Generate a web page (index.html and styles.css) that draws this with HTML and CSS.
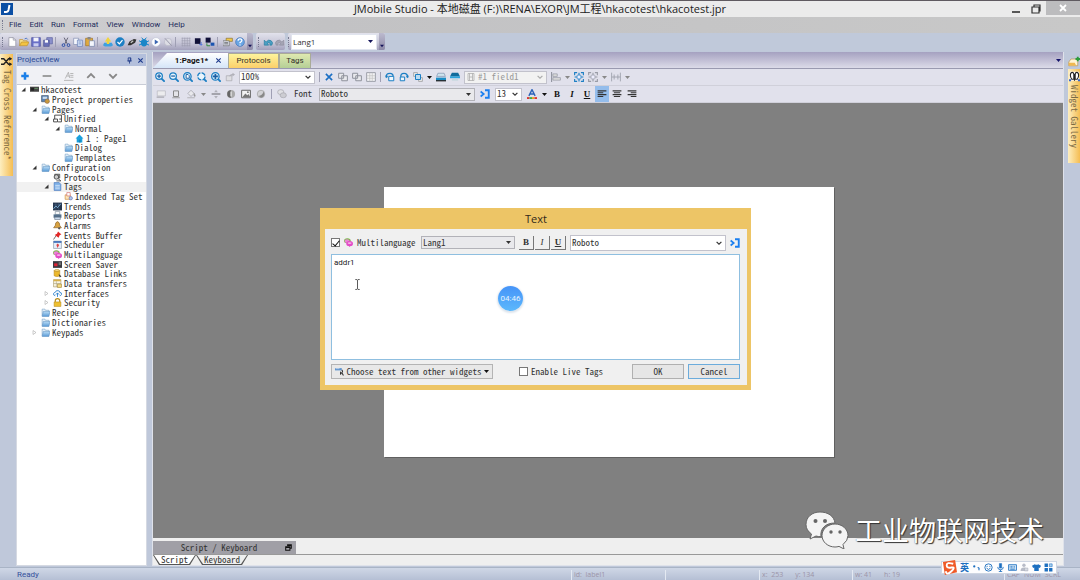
FILE: index.html
```html
<!DOCTYPE html>
<html lang="en">
<head>
<meta charset="utf-8">
<title>JMobile Studio</title>
<link rel="stylesheet" href="styles.css">
</head>
<body>
<svg class="defs" aria-hidden="true">
  <defs>
    <linearGradient id="gFold" x1="0" y1="0" x2="0" y2="1"><stop offset="0" stop-color="#b9dcf6"/><stop offset="1" stop-color="#5a9bd6"/></linearGradient>
  </defs>
  <symbol id="down" viewBox="0 0 10 10"><path d="M0 2h10L5 8z" fill="currentColor"/></symbol>
  <symbol id="chev" viewBox="0 0 10 10"><path d="M1 3l4 4 4-4" fill="none" stroke="currentColor" stroke-width="2"/></symbol>
  <symbol id="open" viewBox="0 0 10 10"><path d="M9 1v8H1z" fill="#333"/></symbol>
  <symbol id="shut" viewBox="0 0 10 10"><path d="M2 1l6 4-6 4z" fill="#fff" stroke="#999"/></symbol>
  <symbol id="folder" viewBox="0 0 16 16"><path d="M2 14V2h5l1 2h6v3" fill="#e8f1f8" stroke="#6c9cc4"/><path d="M4 6h12l-2 9H2z" fill="url(#gFold)" stroke="#5b8fc0"/></symbol>
  <symbol id="newdoc" viewBox="0 0 16 16"><path d="M3 1h7l4 4v10H3z" fill="#fff" stroke="#889"/><path d="M10 1v4h4" fill="none" stroke="#889"/></symbol>
  <symbol id="opendoc" viewBox="0 0 16 16"><path d="M1 14V4h5l1 2h6v2" fill="#f6df8a" stroke="#b98a2a"/><path d="M4 8h12l-3 6H1z" fill="#f3c341" stroke="#b98a2a"/><path d="M9 3q3-3 5 1" fill="none" stroke="#4a76c8" stroke-width="1.5"/></symbol>
  <symbol id="save" viewBox="0 0 16 16"><path d="M1 1h14v14H1z" fill="#6a70c8" stroke="#4a4f9c"/><path d="M4 1h8v6H4z" fill="#f2f2fa"/><path d="M4 10h8v5H4z" fill="#c9cdf0"/></symbol>
  <symbol id="saveall" viewBox="0 0 16 16"><path d="M6 1h9v10H6z" fill="#8b90cc" stroke="#555a9c"/><path d="M1 5h9v10H1z" fill="#6a70b8" stroke="#4a4f8c"/><path d="M3 5h5v4H3z" fill="#fff"/></symbol>
  <symbol id="cut" viewBox="0 0 16 16"><path d="M5 1l5 10M11 1L6 11" stroke="#667" stroke-width="1.6"/><circle cx="4" cy="13" r="2.2" fill="none" stroke="#2b4fa8" stroke-width="1.6"/><circle cx="12" cy="13" r="2.2" fill="none" stroke="#2b4fa8" stroke-width="1.6"/></symbol>
  <symbol id="copy" viewBox="0 0 16 16"><path d="M1 2h8v10H1z" fill="#f4f6fc" stroke="#7a86ac"/><path d="M7 5h8v10H7z" fill="#cfdcf2" stroke="#5f79b4"/><path d="M9 8h4M9 11h4" stroke="#5f79b4"/></symbol>
  <symbol id="paste" viewBox="0 0 16 16"><path d="M1 2h11v12H1z" fill="#e0aa3e" stroke="#9c6f1e"/><path d="M4 0h5v4H4z" fill="#888"/><path d="M7 6h8v9H7z" fill="#f4f6fc" stroke="#6a7ba8"/></symbol>
  <symbol id="deploy" viewBox="0 0 16 16"><path d="M2 9h12l2 4-3 2H3l-3-2z" fill="#3ea0e0"/><path d="M8 0l5 7h-3v4H6V7H3z" fill="#f1d43c"/></symbol>
  <symbol id="okc" viewBox="0 0 16 16"><circle cx="8" cy="8" r="7.500" fill="#1c7fc4"/><path d="M4 8l3 3 5-6" fill="none" stroke="#fff" stroke-width="2"/></symbol>
  <symbol id="plug" viewBox="0 0 16 16"><path d="M1 13l3-6 7-4 4 1-2 5-7 4z" fill="#333"/><path d="M6 9l4-3" stroke="#ccc" stroke-width="2"/></symbol>
  <symbol id="bug" viewBox="0 0 16 16"><ellipse cx="8" cy="9" rx="5" ry="6" fill="#1a86c8"/><path d="M4 1l3 3M12 1L9 4M0 6l4 2M16 6l-4 2M0 13l4-2M16 13l-4-2" stroke="#1a86c8" stroke-width="1.600"/></symbol>
  <symbol id="play" viewBox="0 0 16 16"><circle cx="8" cy="8" r="7" fill="#fff" stroke="#c4c8dc"/><path d="M6 4l6 4-6 4z" fill="#3a64b0"/></symbol>
  <symbol id="stopx" viewBox="0 0 16 16"><circle cx="8" cy="8" r="6" fill="#dcdce4" stroke="#b4b4c4"/><path d="M3 2l11 12" stroke="#9a9aac" stroke-width="1.600"/></symbol>
  <symbol id="gridi" viewBox="0 0 16 16"><path d="M1 2h14M1 6h14M1 10h14M1 14h14M2 1v14M6 1v14M10 1v14M14 1v14" stroke="#9a9aae"/></symbol>
  <symbol id="snap" viewBox="0 0 16 16"><path d="M3 2h9v9H3z" fill="#101038"/><path d="M10 12h5M13 8v6" stroke="#5a78d8" stroke-width="1.500"/></symbol>
  <symbol id="snap2" viewBox="0 0 16 16"><path d="M1 1h8v8H1z" fill="#101038"/><path d="M9 9h6v5H9z" fill="#1a54b0"/><path d="M3 10v4h5" fill="none" stroke="#2e8a3a" stroke-width="1.500"/></symbol>
  <symbol id="props" viewBox="0 0 16 16"><path d="M5 2h10v5H5z" fill="#f0c84a" stroke="#806a2a"/><path d="M0 6h10v8H0z" fill="#d8dce8" stroke="#666"/><path d="M2 9h6M2 11h6" stroke="#444"/></symbol>
  <symbol id="help" viewBox="0 0 16 16"><circle cx="8" cy="8" r="7" fill="#6aa6e4" stroke="#3a6cb4"/><path d="M5 6q0-3 3-3t3 3q0 1-3 3v1M8 12v1.500" fill="none" stroke="#fff" stroke-width="2"/></symbol>
  <symbol id="undo" viewBox="0 0 16 16"><path d="M2 13V5l3 3q4-5 8-2t1 7h-3q1-6-4-3l2 3z" fill="#4ba0c4" stroke="#24789c"/></symbol>
  <symbol id="redo" viewBox="0 0 16 16"><path d="M14 13V5l-3 3Q7 3 3 6t-1 7h3q-1-6 4-3l-2 3z" fill="#a4a4b4" stroke="#8c8c9c"/></symbol>
  <symbol id="zin" viewBox="0 0 16 16"><circle cx="6.500" cy="6.500" r="5.300" fill="#e8f4fc" stroke="#1c7fc4" stroke-width="2"/><path d="M10.500 10.500l5 5" stroke="#1c7fc4" stroke-width="3"/><path d="M3.500 6.500h6M6.500 3.500v6" stroke="#1c5fa4" stroke-width="2"/></symbol>
  <symbol id="zout" viewBox="0 0 16 16"><circle cx="6.500" cy="6.500" r="5.300" fill="#e8f4fc" stroke="#1c7fc4" stroke-width="2"/><path d="M10.500 10.500l5 5" stroke="#1c7fc4" stroke-width="3"/><path d="M3.500 6.500h6" stroke="#1c5fa4" stroke-width="2"/></symbol>
  <symbol id="zfit" viewBox="0 0 16 16"><circle cx="7" cy="7" r="6" fill="#cfe6f6" stroke="#1c7fc4" stroke-width="2"/><path d="M11 11l4.500 4.500" stroke="#1c7fc4" stroke-width="3"/><path d="M5 4h3l2 2v4H5z" fill="#fff" stroke="#1c5fa4" stroke-width="1.500"/></symbol>
  <symbol id="zone" viewBox="0 0 16 16"><circle cx="7" cy="7" r="5.800" fill="#e8f4fc" stroke="#1c7fc4" stroke-width="2" stroke-dasharray="7 2"/><path d="M11 11l4.500 4.500" stroke="#1c7fc4" stroke-width="3"/></symbol>
  <symbol id="zall" viewBox="0 0 16 16"><circle cx="7" cy="7" r="6" fill="#cfe6f6" stroke="#1c7fc4" stroke-width="2"/><path d="M11 11l4.500 4.500" stroke="#1c7fc4" stroke-width="3"/><path d="M3 7h8M7 3v8" stroke="#1c5fa4" stroke-width="2.600"/></symbol>
  <symbol id="hand" viewBox="0 0 16 16"><path d="M2 6h9v8H2z" fill="#dedee2" stroke="#a0a0a8"/><path d="M7 7q0-4 5-4V1l4 3-4 3V5" fill="#b0b0b8"/></symbol>
  <symbol id="del" viewBox="0 0 16 16"><path d="M3 3l10 10M13 3L3 13" stroke="#1c6fc4" stroke-width="2.600"/></symbol>
  <symbol id="group" viewBox="0 0 16 16"><path d="M1 2h8v8H1zM6 6h9v8H6z" fill="#eee" fill-opacity=".6" stroke="#8f929c" stroke-width="1.600"/></symbol>
  <symbol id="table" viewBox="0 0 16 16"><path d="M1 1h14v14H1z" fill="#f2f2f4" stroke="#999ca6" stroke-width="1.500"/><path d="M1 6h14M1 10h14M6 1v14M10 1v14" stroke="#bbb"/></symbol>
  <symbol id="rotl" viewBox="0 0 16 16"><path d="M2 9q-1-7 6-7 5 0 5 5" fill="none" stroke="#1c7fc4" stroke-width="2"/><path d="M0 6l3 4 2-4z" fill="#1c7fc4"/><path d="M6 7h8v7H6z" fill="#eef6fc" stroke="#1c7fc4" stroke-width="1.600"/></symbol>
  <symbol id="rotr" viewBox="0 0 16 16"><path d="M3 9Q2 2 8 2q6 0 6 7" fill="none" stroke="#1c7fc4" stroke-width="2"/><path d="M16 6l-3 4-2-4z" fill="#1c7fc4"/><path d="M2 8h7v6H2z" fill="#eef6fc" stroke="#1c7fc4" stroke-width="1.600"/></symbol>
  <symbol id="order" viewBox="0 0 16 16"><path d="M1 1h6v6H1zM9 9h6v6H9z" fill="#eee" stroke="#888"/><path d="M4 4h8v8H4z" fill="#bcdcf2" stroke="#1c7fc4" stroke-width="1.600"/></symbol>
  <symbol id="front" viewBox="0 0 16 16"><path d="M3 2h10l2 5H1z" fill="#cfe4ee" stroke="#78a"/><path d="M0 9h16v5H0z" fill="#1c8cc4"/><path d="M0 14h16" stroke="#222" stroke-width="2"/></symbol>
  <symbol id="back" viewBox="0 0 16 16"><path d="M3 1h10l3 6H0z" fill="#126c9c"/><path d="M0 7h16v3H0z" fill="#2ca4dc"/><path d="M3 11h10v3H3z" fill="#c8d8e0"/></symbol>
  <symbol id="alignl" viewBox="0 0 16 16"><path d="M1 0v16" stroke="#8a8d98" stroke-width="1.600"/><path d="M3 3h7v4H3zM3 9h12v4H3z" fill="#ddd" stroke="#8a8d98"/></symbol>
  <symbol id="center" viewBox="0 0 16 16"><path d="M1 5V1h4M11 1h4v4M15 11v4h-4M5 15H1v-4M8 1v14M1 8h14" fill="none" stroke="currentColor" stroke-width="1.800"/><path d="M5 5h6v6H5z" fill="#eef" stroke="currentColor"/></symbol>
  <symbol id="space" viewBox="0 0 16 16"><path d="M1 1v14M15 1v14M1 8h14M5 4v8M11 4v8" stroke="#999ca6" stroke-width="1.300"/></symbol>
  <symbol id="shape1" viewBox="0 0 16 16"><path d="M2 3h13v8H2z" fill="#ececee" stroke="#b2b2ba"/><path d="M1 13h12" stroke="#a8a8b0" stroke-width="2"/></symbol>
  <symbol id="shape2" viewBox="0 0 16 16"><path d="M4 3h8v9H4z" fill="#e4e4e8" stroke="#888" stroke-width="1.600"/><path d="M2 14h12" stroke="#999" stroke-width="1.500"/></symbol>
  <symbol id="bucket" viewBox="0 0 16 16"><path d="M3 7l5-5 5 5-5 5z" fill="#e8e8ec" stroke="#96969e"/><path d="M13 7q3 4 1 5-2-1-1-5M2 14h12" fill="#999" stroke="#999"/></symbol>
  <symbol id="line" viewBox="0 0 16 16"><path d="M1 8h14" stroke="#a0a0a8" stroke-width="3"/><path d="M5 5l3-4 3 4zM5 11l3 4 3-4z" fill="#b0b0b8"/></symbol>
  <symbol id="ball" viewBox="0 0 16 16"><circle cx="8" cy="8" r="6.500" fill="#aaa"/><path d="M8 2a6 6 0 0 0 0 12z" fill="#666"/><path d="M8 4v8" stroke="#fff" stroke-width="1.600"/></symbol>
  <symbol id="pic" viewBox="0 0 16 16"><path d="M1 2h14v12H1z" fill="#f2f2f2" stroke="#666" stroke-width="1.600"/><path d="M2 13l5-6 3 3 2-2 3 5z" fill="#777"/><circle cx="11" cy="5" r="1.500" fill="#777"/></symbol>
  <symbol id="ball2" viewBox="0 0 16 16"><circle cx="8" cy="8" r="6" fill="#d2d2d6" stroke="#999"/><path d="M4 11q6 0 8-7 4 8-4 10z" fill="#888"/></symbol>
  <symbol id="blobs" viewBox="0 0 16 16"><ellipse cx="6" cy="5" rx="5" ry="4" fill="#e0e0e4" stroke="#a2a2aa"/><ellipse cx="10" cy="10" rx="5" ry="4" fill="#ccccd2" stroke="#a2a2aa"/></symbol>
  <symbol id="bind" viewBox="0 0 16 16"><path d="M1 4l5 4-5 4" fill="none" stroke="#1a7ff0" stroke-width="2.600"/><path d="M8 2h6v12H8" fill="none" stroke="#1a7ff0" stroke-width="3"/></symbol>
  <symbol id="fcolor" viewBox="0 0 16 16"><path d="M3 11L8 1l5 10M5 8h6" fill="none" stroke="#2b62b8" stroke-width="2.200"/><path d="M0 13h4v3H0z" fill="#d33"/><path d="M4 13h4v3H4z" fill="#4a4"/><path d="M8 13h4v3H8z" fill="#e8a020"/><path d="M12 13h4v3h-4z" fill="#d33"/></symbol>
  <symbol id="tl" viewBox="0 0 16 16"><path d="M1 3h14M1 6h9M1 9h14M1 12h9" stroke="#333" stroke-width="1.800"/></symbol>
  <symbol id="tc" viewBox="0 0 16 16"><path d="M1 3h14M3 6h10M1 9h14M3 12h10" stroke="#333" stroke-width="1.800"/></symbol>
  <symbol id="tr" viewBox="0 0 16 16"><path d="M1 3h14M6 6h9M1 9h14M6 12h9" stroke="#333" stroke-width="1.800"/></symbol>
  <symbol id="film" viewBox="0 0 16 16"><path d="M2 1h12v14H2zM5 1v14M11 1v14M5 8h6" fill="none" stroke="#a8a8a8" stroke-width="1.400"/></symbol>
  <symbol id="plus" viewBox="0 0 16 16"><path d="M8 2v12M2 8h12" stroke="#1a7fe8" stroke-width="4"/></symbol>
  <symbol id="minus" viewBox="0 0 16 16"><path d="M1 8h14" stroke="#999" stroke-width="3"/></symbol>
  <symbol id="rename" viewBox="0 0 16 16"><path d="M2 12L7 2l2 9M4 8h5M10 4h5M10 7h5M10 10h5M0 15h15" fill="none" stroke="#aaa" stroke-width="1.300"/></symbol>
  <symbol id="up2" viewBox="0 0 16 16"><path d="M2 11l6-6 6 6" fill="none" stroke="#888" stroke-width="3"/></symbol>
  <symbol id="dn2" viewBox="0 0 16 16"><path d="M2 5l6 6 6-6" fill="none" stroke="#888" stroke-width="3"/></symbol>
  <symbol id="pin" viewBox="0 0 16 16"><path d="M5 2h6v7H5zM3 9h10M8 9v6M10 2v7" fill="none" stroke="#26408c" stroke-width="2"/></symbol>
  <symbol id="x" viewBox="0 0 16 16"><path d="M3 3l10 10M13 3L3 13" stroke="currentColor" stroke-width="2.600"/></symbol>
  <symbol id="shuffle" viewBox="0 0 16 16"><path d="M0 4h4l7 8h4M0 12h4l7-8h4" fill="none" stroke="#222" stroke-width="2"/><path d="M12 1l4 3-4 3zM12 9l4 3-4 3z" fill="#222"/></symbol>
  <symbol id="device" viewBox="0 0 16 16"><path d="M0 3h16v9H0z" fill="#444"/><path d="M2 5h5v5H2z" fill="#222"/><path d="M8 6h6" stroke="#7c7"/></symbol>
  <symbol id="pprop" viewBox="0 0 16 16"><path d="M1 1h12v11H1z" fill="#5d84b4" stroke="#345"/><path d="M3 3h8v4H3z" fill="#cde"/><circle cx="11" cy="11" r="4" fill="#c99a3c" stroke="#865"/></symbol>
  <symbol id="unif" viewBox="0 0 16 16"><path d="M3 9V2h12v12H9" fill="none" stroke="#333" stroke-width="1.500"/><path d="M1 9h7v5H1zM11 9h4" fill="none" stroke="#333" stroke-width="1.500"/></symbol>
  <symbol id="home" viewBox="0 0 16 16"><path d="M8 1l7 7h-2v7H3V8H1z" fill="#1ba0dc"/><path d="M7 10h3v5H7z" fill="#1782b8"/></symbol>
  <symbol id="proto" viewBox="0 0 16 16"><path d="M3 2h9v7H3z" fill="#888" stroke="#444"/><circle cx="6" cy="7" r="4" fill="#ccc" stroke="#444" stroke-width="1.500"/><path d="M9 10l5 4H6" fill="none" stroke="#444" stroke-width="1.500"/></symbol>
  <symbol id="tags" viewBox="0 0 16 16"><path d="M2 1h9l3 3v11H2z" fill="#7db0e8" stroke="#3a6cb8"/><path d="M4 6h8M4 9h8M4 12h8" stroke="#fff"/></symbol>
  <symbol id="itags" viewBox="0 0 16 16"><path d="M2 5h9v8H2z" fill="#fce6b8" stroke="#c47a2a"/><path d="M5 1h6v6H5z" fill="#fff" stroke="#c55"/><circle cx="12" cy="11" r="3" fill="#aac8ee" stroke="#66a"/></symbol>
  <symbol id="trend" viewBox="0 0 16 16"><path d="M0 1h16v14H0z" fill="#25364e"/><path d="M1 12l4-5 3 3 6-7" fill="none" stroke="#8cc8f0" stroke-width="1.500"/><path d="M1 5h14M5 2v12M10 2v12" stroke="#5a7ba0" stroke-width=".6"/></symbol>
  <symbol id="print" viewBox="0 0 16 16"><path d="M4 1h8v5H4z" fill="#fff" stroke="#678"/><path d="M1 6h14v6H1z" fill="#54708c"/><path d="M3 11h10v4H3z" fill="#cfe0f4" stroke="#567"/></symbol>
  <symbol id="bell" viewBox="0 0 16 16"><path d="M8 1q4 1 4 7l3 4H1l3-4q0-6 4-7z" fill="#d8a240" stroke="#7c5320"/><circle cx="11" cy="13" r="2" fill="#555"/></symbol>
  <symbol id="rpin" viewBox="0 0 16 16"><path d="M9 1l6 5-3 1-2 5-7-5 4-2z" fill="#e02828"/><path d="M5 9l-4 6" stroke="#555" stroke-width="1.500"/></symbol>
  <symbol id="sched" viewBox="0 0 16 16"><path d="M1 2h14v13H1z" fill="#e6eefa" stroke="#789"/><path d="M1 2h14v3H1z" fill="#3a6cb8"/><path d="M8 6l3 3-3 5-2-5z" fill="#d44"/></symbol>
  <symbol id="lang" viewBox="0 0 16 16"><ellipse cx="6" cy="5" rx="6" ry="4.500" fill="#7cb84c"/><ellipse cx="5.500" cy="5.500" rx="4.500" ry="3.500" fill="#e884d4"/><path d="M9 14l1 2 2-3z" fill="#d83cbc"/><ellipse cx="10" cy="10" rx="6" ry="4.500" fill="#e44cc8"/><ellipse cx="10" cy="9" rx="3.500" ry="1.500" fill="#f6b4e8"/></symbol>
  <symbol id="scr" viewBox="0 0 16 16"><path d="M0 2h16v12H0z" fill="#3a3a40"/><path d="M2 6h6v5H2z" fill="#d23"/><path d="M10 4h4v5h-4z" fill="#777"/></symbol>
  <symbol id="db" viewBox="0 0 16 16"><ellipse cx="7" cy="3" rx="5" ry="2" fill="#fbe48c" stroke="#b8871c"/><path d="M2 3v9q5 3 10 0V3q-5 3-10 0z" fill="#ecb92c" stroke="#b8871c"/><path d="M10 9l5 4-3 2z" fill="#333"/></symbol>
  <symbol id="dt" viewBox="0 0 16 16"><path d="M1 1h13v13H1z" fill="#f8f4e4" stroke="#a08c50"/><path d="M1 1h13v3H1z" fill="#d9b24c"/><path d="M1 8h13M6 4v10" stroke="#a9a07c"/><path d="M8 9h7v6H8z" fill="#f4dc84" stroke="#a08030"/></symbol>
  <symbol id="cloud" viewBox="0 0 16 16"><path d="M4 12q-4-1-3-4 1-2 3-2 1-4 5-3 3 0 3 3 4 0 3 4-1 2-3 2M8 14V7M5 10l3-3 3 3" fill="none" stroke="#2c80cc" stroke-width="1.600"/></symbol>
  <symbol id="lock" viewBox="0 0 16 16"><path d="M4 8V5q0-4 4-4t4 4v3" fill="none" stroke="#b88c1c" stroke-width="2"/><path d="M2 7h12v8H2z" fill="#efc030" stroke="#b88c1c"/></symbol>
  <symbol id="wbin" viewBox="0 0 16 16"><path d="M1 1h14v13H1z" fill="#fff"/><path d="M7 12H4q-2-3-2-6 0-4 3-4 2 0 2 3zM9 12h3q2-3 2-6 0-4-3-4-2 0-2 3zM8 4v10" fill="none" stroke="#222" stroke-width="1.600"/><path d="M0 12h3v3H0zM13 12h3v3h-3z" fill="#36c"/></symbol>
  <symbol id="note" viewBox="0 0 16 16"><path d="M1 8l3-4h9v9H1z" fill="#fff4d4" stroke="#b89858"/><path d="M1 9h8l2 4H1z" fill="#efb850"/><path d="M13 1v6M10 4h6" stroke="#2c9c3c" stroke-width="2.500"/></symbol>
  <symbol id="widg" viewBox="0 0 16 16"><path d="M0 2h12v4H0z" fill="#5a90cc"/><path d="M1 3h7" stroke="#fff"/><path d="M12 5q3 3 0 5l3 5" fill="none" stroke="#333" stroke-width="1.800"/><path d="M9 7v7l3-2z" fill="#222"/></symbol>
</svg>

<div class="app">
  <header class="titlebar">
    <svg class="logo" viewBox="0 0 12 12"><path d="M0 0h12v12H0z" fill="#0b4fa4"/><path d="M8.500 2L7.500 7Q7 9 5 9H3" fill="none" stroke="#fff" stroke-width="2"/></svg>
    <h1 class="title">JMobile Studio - 本地磁盘 (F:)\RENA\EXOR\JM工程\hkacotest\hkacotest.jpr</h1>
    <div class="winbtns">
      <button class="wb" aria-label="Minimize"><svg viewBox="0 0 10 10"><path d="M1 8h8" stroke="#333" stroke-width="1.600"/></svg></button>
      <button class="wb" aria-label="Restore"><svg viewBox="0 0 10 10"><path d="M1 3h7v6H1zM3 3V1h6v6H8" fill="none" stroke="#333" stroke-width="1.200"/></svg></button>
      <button class="wb close" aria-label="Close"><svg viewBox="0 0 10 10"><path d="M2 2l6 6M8 2L2 8" stroke="#fff" stroke-width="1.800"/></svg></button>
    </div>
  </header>

  <nav class="menubar">
    <i class="grip"></i>
    <button>File</button><button>Edit</button><button>Run</button><button>Format</button><button>View</button><button>Window</button><button>Help</button>
  </nav>

  <div class="toolbars">
    <div class="tb tb-main">
      <i class="grip"></i>
      <button class="ic" aria-label="New"><svg><use href="#newdoc"/></svg></button>
      <button class="ic" aria-label="Open"><svg><use href="#opendoc"/></svg></button>
      <button class="ic" aria-label="Save"><svg><use href="#save"/></svg></button>
      <button class="ic" aria-label="Save all"><svg><use href="#saveall"/></svg></button>
      <i class="sep"></i>
      <button class="ic" aria-label="Cut"><svg><use href="#cut"/></svg></button>
      <button class="ic" aria-label="Copy"><svg><use href="#copy"/></svg></button>
      <button class="ic" aria-label="Paste"><svg><use href="#paste"/></svg></button>
      <i class="sep"></i>
      <button class="ic" aria-label="Download"><svg><use href="#deploy"/></svg></button>
      <button class="ic" aria-label="Validate"><svg><use href="#okc"/></svg></button>
      <button class="ic" aria-label="Connect"><svg><use href="#plug"/></svg></button>
      <button class="ic" aria-label="Debug"><svg><use href="#bug"/></svg></button>
      <button class="ic" aria-label="Run"><svg><use href="#play"/></svg></button>
      <button class="ic" aria-label="Stop"><svg><use href="#stopx"/></svg></button>
      <i class="sep"></i>
      <button class="ic" aria-label="Grid"><svg><use href="#gridi"/></svg></button>
      <button class="ic" aria-label="Snap to grid"><svg><use href="#snap"/></svg></button>
      <button class="ic" aria-label="Snap to object"><svg><use href="#snap2"/></svg></button>
      <i class="sep"></i>
      <button class="ic" aria-label="Properties"><svg><use href="#props"/></svg></button>
      <button class="ic" aria-label="Help"><svg><use href="#help"/></svg></button>
      <i class="cap"><svg><use href="#down"/></svg></i>
    </div>
    <div class="tb">
      <i class="grip"></i>
      <button class="ic" aria-label="Undo"><svg><use href="#undo"/></svg></button>
      <button class="ic" aria-label="Redo"><svg><use href="#redo"/></svg></button>
    </div>
    <div class="tb tb-lang">
      <i class="grip"></i>
      <span class="combo sans lang"><select aria-label="Language"><option>Lang1</option></select><svg class="navy"><use href="#down"/></svg></span>
      <i class="cap"><svg><use href="#down"/></svg></i>
    </div>
  </div>

  <main class="work">
    <aside class="strip">
      <button class="vtab left"><svg><use href="#shuffle"/></svg><span>Tag Cross Reference*</span></button>
    </aside>

    <section class="project">
      <header class="phead"><h2>ProjectView</h2>
        <button aria-label="Pin"><svg><use href="#pin"/></svg></button>
        <button aria-label="Close panel"><svg><use href="#x"/></svg></button>
      </header>
      <div class="ptools">
        <button aria-label="Add"><svg><use href="#plus"/></svg></button>
        <button aria-label="Remove"><svg><use href="#minus"/></svg></button>
        <button aria-label="Rename"><svg><use href="#rename"/></svg></button>
        <button aria-label="Move up"><svg><use href="#up2"/></svg></button>
        <button aria-label="Move down"><svg><use href="#dn2"/></svg></button>
      </div>
      <div class="treebox">
        <ul class="tree">
          <li class="l0"><svg class="tw"><use href="#open"/></svg><svg><use href="#device"/></svg>hkacotest</li>
          <li class="l1"><i class="tw"></i><svg><use href="#pprop"/></svg>Project properties</li>
          <li class="l1"><svg class="tw"><use href="#open"/></svg><svg><use href="#folder"/></svg>Pages</li>
          <li class="l2"><svg class="tw"><use href="#open"/></svg><svg><use href="#unif"/></svg>Unified</li>
          <li class="l3"><svg class="tw"><use href="#open"/></svg><svg><use href="#folder"/></svg>Normal</li>
          <li class="l4"><i class="tw"></i><svg><use href="#home"/></svg>1 : Page1</li>
          <li class="l3"><i class="tw"></i><svg><use href="#folder"/></svg>Dialog</li>
          <li class="l3"><i class="tw"></i><svg><use href="#folder"/></svg>Templates</li>
          <li class="l1"><svg class="tw"><use href="#open"/></svg><svg><use href="#folder"/></svg>Configuration</li>
          <li class="l2"><i class="tw"></i><svg><use href="#proto"/></svg>Protocols</li>
          <li class="l2 sel"><svg class="tw"><use href="#open"/></svg><svg><use href="#tags"/></svg>Tags</li>
          <li class="l3"><i class="tw"></i><svg><use href="#itags"/></svg>Indexed Tag Set</li>
          <li class="l2"><i class="tw"></i><svg><use href="#trend"/></svg>Trends</li>
          <li class="l2"><i class="tw"></i><svg><use href="#print"/></svg>Reports</li>
          <li class="l2"><i class="tw"></i><svg><use href="#bell"/></svg>Alarms</li>
          <li class="l2"><i class="tw"></i><svg><use href="#rpin"/></svg>Events Buffer</li>
          <li class="l2"><i class="tw"></i><svg><use href="#sched"/></svg>Scheduler</li>
          <li class="l2"><i class="tw"></i><svg><use href="#lang"/></svg>MultiLanguage</li>
          <li class="l2"><i class="tw"></i><svg><use href="#scr"/></svg>Screen Saver</li>
          <li class="l2"><i class="tw"></i><svg><use href="#db"/></svg>Database Links</li>
          <li class="l2"><i class="tw"></i><svg><use href="#dt"/></svg>Data transfers</li>
          <li class="l2"><svg class="tw"><use href="#shut"/></svg><svg><use href="#cloud"/></svg>Interfaces</li>
          <li class="l2"><svg class="tw"><use href="#shut"/></svg><svg><use href="#lock"/></svg>Security</li>
          <li class="l1"><i class="tw"></i><svg><use href="#folder"/></svg>Recipe</li>
          <li class="l1"><i class="tw"></i><svg><use href="#folder"/></svg>Dictionaries</li>
          <li class="l1"><svg class="tw"><use href="#shut"/></svg><svg><use href="#folder"/></svg>Keypads</li>
        </ul>
      </div>
    </section>

    <section class="editor">
      <div class="tabs">
        <button class="tab active">1:Page1* <svg><use href="#x"/></svg></button>
        <button class="tab yellow">Protocols</button>
        <button class="tab green">Tags</button>
        <button class="more" aria-label="All tabs"><svg><use href="#down"/></svg></button>
      </div>
      <div class="bar bar1">
        <button class="ic" aria-label="Zoom in"><svg><use href="#zin"/></svg></button>
        <button class="ic" aria-label="Zoom out"><svg><use href="#zout"/></svg></button>
        <button class="ic" aria-label="Fit page"><svg><use href="#zfit"/></svg></button>
        <button class="ic" aria-label="Zoom area"><svg><use href="#zone"/></svg></button>
        <button class="ic" aria-label="Zoom all"><svg><use href="#zall"/></svg></button>
        <button class="ic" aria-label="Pan"><svg><use href="#hand"/></svg></button>
        <span class="combo zoom"><select aria-label="Zoom"><option>100%</option></select><svg><use href="#chev"/></svg></span>
        <i class="sep"></i>
        <button class="ic" aria-label="Delete"><svg><use href="#del"/></svg></button>
        <button class="ic" aria-label="Group"><svg><use href="#group"/></svg></button>
        <button class="ic" aria-label="Ungroup"><svg><use href="#group"/></svg></button>
        <button class="ic" aria-label="Table"><svg><use href="#table"/></svg></button>
        <i class="sep"></i>
        <button class="ic" aria-label="Rotate left"><svg><use href="#rotl"/></svg></button>
        <button class="ic" aria-label="Rotate right"><svg><use href="#rotr"/></svg></button>
        <button class="ic" aria-label="Order"><svg><use href="#order"/></svg></button>
        <svg class="dd"><use href="#down"/></svg>
        <button class="ic" aria-label="Bring forward"><svg><use href="#front"/></svg></button>
        <button class="ic" aria-label="Send backward"><svg><use href="#back"/></svg></button>
        <span class="combo field off"><svg class="film"><use href="#film"/></svg><select aria-label="Field" disabled><option>#1 field1</option></select><svg><use href="#chev"/></svg></span>
        <button class="ic" aria-label="Align"><svg><use href="#alignl"/></svg></button>
        <svg class="dd dim"><use href="#down"/></svg>
        <button class="ic blue" aria-label="Center"><svg><use href="#center"/></svg></button>
        <button class="ic grey" aria-label="Resize"><svg><use href="#center"/></svg></button>
        <svg class="dd dim"><use href="#down"/></svg>
        <button class="ic" aria-label="Space"><svg><use href="#space"/></svg></button>
        <svg class="dd dim"><use href="#down"/></svg>
      </div>
      <div class="bar bar2">
        <button class="ic" aria-label="Label"><svg><use href="#shape1"/></svg></button>
        <button class="ic" aria-label="Box"><svg><use href="#shape2"/></svg></button>
        <button class="ic" aria-label="Fill"><svg><use href="#bucket"/></svg></button>
        <svg class="dd dim"><use href="#down"/></svg>
        <button class="ic" aria-label="Line"><svg><use href="#line"/></svg></button>
        <button class="ic" aria-label="Opacity"><svg><use href="#ball"/></svg></button>
        <button class="ic" aria-label="Image"><svg><use href="#pic"/></svg></button>
        <button class="ic" aria-label="Effect"><svg><use href="#ball2"/></svg></button>
        <i class="sep"></i>
        <button class="ic" aria-label="Languages"><svg><use href="#blobs"/></svg></button>
        <label class="flabel" for="font">Font</label>
        <span class="combo flat fontsel"><select id="font"><option>Roboto</option></select><svg><use href="#down"/></svg></span>
        <button class="ic" aria-label="Bind font"><svg><use href="#bind"/></svg></button>
        <span class="combo size"><select aria-label="Font size"><option>13</option></select><svg><use href="#chev"/></svg></span>
        <button class="ic" aria-label="Font colour"><svg><use href="#fcolor"/></svg></button>
        <svg class="dd"><use href="#down"/></svg>
        <button class="ic txt"><b>B</b></button>
        <button class="ic txt"><b><em>I</em></b></button>
        <button class="ic txt"><b><u>U</u></b></button>
        <button class="ic on" aria-label="Align left"><svg><use href="#tl"/></svg></button>
        <button class="ic" aria-label="Align centre"><svg><use href="#tc"/></svg></button>
        <button class="ic" aria-label="Align right"><svg><use href="#tr"/></svg></button>
      </div>
      <div class="canvas"><div class="page"></div></div>
      <div class="dock">
        <div class="dockhead"><span>Script / Keyboard</span><svg viewBox="0 0 10 10"><path d="M3 1h6v5H7M1 4h6v5H1zM1 5h6M3 2h6" fill="none" stroke="#111" stroke-width="1.500"/></svg></div>
        <div class="docktabs">
          <button class="dt on"><span>Script</span></button>
          <button class="dt"><span>Keyboard</span></button>
        </div>
      </div>
    </section>

    <aside class="strip rstrip">
      <button class="nbtn" aria-label="New widget"><svg><use href="#note"/></svg></button>
      <button class="vtab right"><svg><use href="#wbin"/></svg><span>Widget Gallery</span></button>
    </aside>
  </main>

  <footer class="status">
    <span class="ready">Ready</span>
    <span class="cell c1">id: &nbsp;label1</span>
    <span class="cell c2"></span>
    <span class="cell c3"><span>x: &nbsp;253</span><span>y: 134</span></span>
    <span class="cell c4"><span>w: 41</span><span>h: 19</span></span>
    <span class="cell c5"><span>CAP</span><span>NUM</span><span>SCRL</span></span>
  </footer>

  <form class="dialog" role="dialog" aria-label="Text">
    <h2 class="dtitle">Text</h2>
    <div class="dbody">
      <div class="drow">
        <input type="checkbox" id="ml" class="chk" checked>
        <svg class="dic"><use href="#lang"/></svg>
        <label for="ml" class="mlabel">Multilanguage</label>
        <span class="combo flat dlang"><select aria-label="Dialog language"><option>Lang1</option></select><svg><use href="#down"/></svg></span>
        <span class="fmt"><button type="button"><b>B</b></button><button type="button"><em>I</em></button><button type="button"><b><u>U</u></b></button></span>
        <span class="combo dfont"><select aria-label="Dialog font"><option>Roboto</option></select><svg><use href="#chev"/></svg></span>
        <button type="button" class="ic" aria-label="Bind text"><svg><use href="#bind"/></svg></button>
      </div>
      <textarea class="dtext" aria-label="Text" spellcheck="false">addr1</textarea>
      <div class="drow">
        <button type="button" class="choose"><svg><use href="#widg"/></svg>Choose text from other widgets<svg class="dd"><use href="#down"/></svg></button>
        <span class="live"><input type="checkbox" id="live" class="chk"><label for="live">Enable Live Tags</label></span>
        <button type="button" class="btn">OK</button>
        <button type="button" class="btn focus">Cancel</button>
      </div>
    </div>
  </form>

  <svg class="ibeam" viewBox="0 0 6 10"><path d="M1 .5h1.500L3 1l.5-.5H5M3 1v8M1 9.500h1.500L3 9l.5.5H5" fill="none" stroke="#444" stroke-width=".8"/></svg>
  <div class="timer">04:46</div>

  <div class="brand">
    <svg viewBox="0 0 44 38"><path d="M15 1C7 1 1 6 1 13.500c0 4 2 7 5.500 9.500L5 28l6-3q2 .7 5 .7C15 18 20 12 30 12 29 5 23 1 15 1z" fill="#f4f4f4" stroke="#666"/><path d="M30 13c-7 0-13 5-13 11.500S23 36 30 36q2 0 4-.6l5 2.600-1-4.500q5-4 5-9C43 18 37 13 30 13z" fill="#f4f4f4" stroke="#666"/><g fill="#666"><circle cx="10.500" cy="10" r="2"/><circle cx="20" cy="10" r="2"/><circle cx="26" cy="21" r="1.700"/><circle cx="35" cy="21" r="1.700"/></g></svg>
    <span>工业物联网技术</span>
  </div>

  <div class="ime">
    <svg class="sogou" viewBox="0 0 16 16"><path d="M1 2l13-2 2 13-13 3z" fill="#f05a28"/><path d="M12 4Q5 2 5 5.500T10 8t0 4-6 0" fill="none" stroke="#fff" stroke-width="2"/></svg>
    <span>英</span>
    <svg viewBox="0 0 16 16"><circle cx="4" cy="6" r="2" fill="#1c6fc0"/><path d="M10 8q4 0 2 5" fill="none" stroke="#1c6fc0" stroke-width="2"/></svg>
    <svg viewBox="0 0 16 16"><circle cx="8" cy="8" r="6.500" fill="none" stroke="#1c6fc0" stroke-width="1.600"/><path d="M4.500 9q3.500 5 7 0M5.500 5v2M10.500 5v2" fill="none" stroke="#1c6fc0" stroke-width="1.600"/></svg>
    <svg viewBox="0 0 16 16"><path d="M6 1h4v8H6z" fill="#1c6fc0" stroke="#1c6fc0" stroke-linejoin="round"/><path d="M3 7q0 5 5 5t5-5M8 12v3M5 15h6" fill="none" stroke="#1c6fc0" stroke-width="1.500"/></svg>
    <svg viewBox="0 0 16 16"><path d="M1 3h14v10H1z" fill="#dcecfa" stroke="#1c6fc0" stroke-width="1.500"/><path d="M3 6h10M3 8.500h10" stroke="#1c6fc0" stroke-width="1.500" stroke-dasharray="1.500 1"/><path d="M4 11h8" stroke="#1c6fc0" stroke-width="1.500"/></svg>
    <svg viewBox="0 0 16 16"><circle cx="7" cy="4" r="3" fill="#b8bcc8"/><path d="M1 14q0-6 6-6t6 6z" fill="#b8bcc8"/><path d="M8 9h6v5H8z" fill="#d8dce4" stroke="#a8acb8"/></svg>
    <svg viewBox="0 0 16 16"><path d="M5 2q3 2 6 0l5 3-2 4-2-1v6H4V8L2 9 0 5z" fill="#1c6fc0"/></svg>
    <svg viewBox="0 0 16 16"><path d="M1 1h6v6H1zM1 9h6v6H1zM9 9h6v6H9z" fill="#1c6fc0"/><path d="M9.500 1.500h5v5h-5z" fill="#a8d0f0" stroke="#1c6fc0"/></svg>
  </div>
</div>
</body>
</html>
```
FILE: styles.css
```css
* { box-sizing: border-box; }

:root {
  --mono: "Noto Sans Mono CJK SC", "Liberation Mono", monospace;
  --ui: Roboto, "Noto Sans", "Noto Sans CJK SC", sans-serif;
  --small: "Open Sans", "Noto Sans", "Noto Sans CJK SC", sans-serif;
}

body { margin: 0; background: #bfc8da; }

button, select, textarea, input { font: inherit; color: inherit; margin: 0; padding: 0; border: 0; background: none; border-radius: 0; }
button { display: flex; align-items: center; justify-content: center; }
h1, h2, ul { margin: 0; padding: 0; font-weight: normal; list-style: none; }
svg { display: block; flex: none; }
.defs { position: absolute; width: 0; height: 0; }

.app {
  position: relative;
  display: flex;
  flex-direction: column;
  height: 100vh;
  overflow: hidden;
  font: 9px/10px var(--mono);
  color: #333;
}

/* Title bar and menu */
.titlebar { display: grid; grid-template-columns: 74px 1fr 74px; align-items: center; height: 17px; background: #ebebeb; border-top: 1px solid #5f5a60; }
.logo { width: 12px; height: 12px; margin-left: 1px; }
.title { font: 11px/16px var(--small); color: #222; text-align: center; white-space: nowrap; }
.winbtns { display: flex; justify-content: flex-end; height: 100%; }
.wb { width: 20px; flex: none; }
.wb svg { width: 10px; height: 10px; }
.wb.close { width: 34px; height: 14px; background: #bcbcbe; }

.menubar { display: flex; align-items: center; gap: 8px; height: 16px; padding-left: 2px; background: linear-gradient(90deg, #d0d0d2, #c2c2c4 30%, #c8c8c8); font: 8px/10px var(--ui); color: #232c5c; }
.grip { width: 1px; height: 10px; border-left: 1px dotted #777a90; }
.menubar .grip { margin-right: -2px; }

/* Main toolbars */
.toolbars { display: flex; gap: 3px; height: 18px; padding-bottom: 1px; background: #c0c9da; }
.tb { display: flex; align-items: center; gap: 2px; padding-left: 2px; background: linear-gradient(#e2e2ec, #c9c8d9 55%, #a3a1bc); border-radius: 2px; }
.tb .grip { margin-right: 2px; }
.tb-lang { padding-left: 0; }
.tb-lang .grip { margin-right: 0; }
.ic { width: 10px; height: 12px; flex: none; }
.ic svg { width: 10px; height: 10px; }
.sep { width: 4px; height: 10px; flex: none; border-left: 1px solid #9f9fb4; }
.cap { display: flex; align-items: flex-end; justify-content: center; align-self: stretch; width: 6px; padding-bottom: 2px; background: linear-gradient(#bcbace, #8d8aa8); border-radius: 0 2px 2px 0; color: #14145a; }
.cap svg { width: 4px; height: 4px; }

/* Drop-down lists */
.combo { display: grid; grid-template-columns: 1fr 12px; align-items: center; height: 13px; flex: none; background: #fff; border: 1px solid #c2c2cc; }
.combo select { grid-area: 1 / 1 / 2 / 3; width: 100%; height: 100%; padding-left: 1px; appearance: none; opacity: 1; }
.combo svg { grid-area: 1 / 2; justify-self: center; width: 6px; height: 6px; pointer-events: none; color: #333; }
.combo.flat { background: #e9e9ec; border-color: #b2b2b8; }
.combo.flat svg { width: 5px; height: 5px; }
.sans { font: 8px/10px var(--small); }
.combo.lang { width: 86px; height: 16px; border-color: #e0e4ee; }
.combo.lang svg { width: 5px; height: 5px; color: #14145a; }
.zoom { width: 76px; }
.combo.field { grid-template-columns: 12px 1fr 12px; width: 83px; background: #f2f2f2; color: #999; }
.combo.field select { grid-area: 1 / 2 / 2 / 4; }
.combo.field svg { grid-area: 1 / 3; color: #aaa; }
.combo.field .film { grid-area: 1 / 1; width: 8px; height: 8px; }
.fontsel { width: 156px; }
.size { width: 27px; }

/* Work area */
.work { display: flex; flex: 1; min-height: 0; gap: 4px; padding-top: 1px; }
.strip { width: 13px; flex: none; padding-top: 2px; }
.vtab { flex-direction: column; justify-content: flex-start; gap: 3px; width: 100%; padding: 2px 0; background: linear-gradient(90deg, #fdeec0, #f5bd52); color: #7b6a45; }
.vtab svg { width: 11px; height: 11px; }
.vtab span { writing-mode: vertical-rl; white-space: nowrap; }
.vtab.left { height: 122px; }
.vtab.right { height: 94px; }
.rstrip { width: 12px; }
.nbtn { width: 12px; height: 15px; }
.nbtn svg { width: 12px; height: 12px; }

.project { display: flex; flex-direction: column; width: 131px; flex: none; margin: 1px 0; margin-left: -1px; background: #f0f1f5; border: 1px solid #d5d9e2; }
.phead { display: flex; align-items: center; gap: 4px; height: 12px; padding-right: 2px; background: #b3bfdb; font: 8px/10px var(--ui); color: #2b4a96; }
.phead h2 { flex: 1; font: inherit; }
.phead svg { width: 7px; height: 7px; color: #1d3a8c; }
.ptools { display: flex; gap: 12px; height: 18px; padding: 1px 0 0 3px; }
.ptools svg { width: 10px; height: 10px; }
.treebox { flex: 1; min-height: 0; background: #fff; border-top: 1px solid #c8ccd6; }
.tree { display: flex; flex-direction: column; height: 252px; line-height: 9px; }
.tree li { display: flex; flex: 1; align-items: center; gap: 2px; min-height: 0; white-space: nowrap; }
.tree svg { width: 9px; height: 9px; }
.tree .tw { width: 5px; height: 5px; margin-right: 2px; }
.l0 { padding-left: 4px; }
.l1 { padding-left: 15px; }
.l2 { padding-left: 27px; }
.l3 { padding-left: 38px; }
.l4 { padding-left: 49px; }
.sel { background: #f1f1f1; }

.editor { display: flex; flex-direction: column; flex: 1; min-width: 0; margin: 0 0 1px 1px; background: #efefef; border: 1px solid #dfe2ea; border-top: 0; }
.tabs { display: flex; align-items: flex-end; height: 17px; background: linear-gradient(#a5a1c0, #dcdbe8); font: 8px/10px var(--ui); border-bottom: 1px solid #9a9ab0; }
.tab { height: 15px; border: 1px solid #a9ab98; border-bottom: 0; color: #33302a; }
.tab svg { width: 7px; height: 7px; color: #1d3a8c; }
.tab.active { gap: 7px; width: 75px; padding-left: 16px; border: 0; background: linear-gradient(#fff, #d5e5f8); clip-path: polygon(14px 0, 100% 0, 100% 100%, 0 100%); font-weight: bold; color: #111; }
.tab.yellow { width: 51px; background: linear-gradient(#fdf49c, #fbcf6a); }
.tab.green { width: 32px; background: linear-gradient(#dfe9b0, #b5cf96); }
.more { align-self: center; margin-left: auto; padding-right: 2px; }
.more svg { width: 5px; height: 5px; color: #14146a; }

.bar { display: flex; align-items: center; height: 17px; padding-left: 2px; background: #e1e1ec; border-bottom: 1px solid #d0d0da; overflow: hidden; }
.bar .sep { width: 1px; }
.bar1 { gap: 4px; }
.bar2 { gap: 5px; padding-left: 3px; }
.dd { width: 5px; height: 5px; color: #111; }
.dim { color: #888; }
.blue { color: #1c7fc4; }
.grey { color: #999ca6; }
.txt { font: 9px/10px "Liberation Serif", serif; color: #111; }
.on.ic { background: #94bdec; outline: 2px solid #94bdec; }
.flabel { padding: 0 2px; }

.canvas { display: flex; align-items: center; justify-content: center; flex: 1; min-height: 0; padding: 2px 0 0 2px; background: #808080; }
.page { width: 450px; height: 270px; background: #fff; box-shadow: 1px 1px 0 #606060; }

.dock { height: 27px; padding-top: 3px; }
.dockhead { display: flex; align-items: center; width: 143px; height: 13px; background: #a09fa6; }
.dockhead span { flex: 1; text-align: center; }
.dockhead svg { width: 7px; height: 7px; margin-right: 4px; }
.docktabs { display: flex; height: 11px; border-top: 1px solid #999; }
.dt { height: 10px; padding: 0 1px 1px; background: #555; clip-path: polygon(0 0, 100% 0, calc(100% - 6px) 100%, 6px 100%); }
.dt span { display: block; height: 9px; padding: 0 7px; background: #efefef; line-height: 9px; clip-path: polygon(0 0, 100% 0, calc(100% - 6px) 100%, 6px 100%); }
.dt.on span { background: #fff; }

/* Status bar */
.status { display: flex; align-items: center; height: 13px; padding-top: 2px; background: linear-gradient(#cfd7e6, #b5bfd4); border-top: 1px solid #a9b4c6; font: 7px/10px var(--small); color: #9c94a8; white-space: nowrap; }
.ready { flex: 1; padding-left: 17px; font: 8px/10px var(--ui); color: #34509c; }
.cell { display: flex; gap: 12px; padding-left: 2px; height: 10px; border-left: 1px solid #e4e9f2; }
.c1 { width: 94px; }
.c2 { width: 94px; }
.c3 { width: 93px; }
.c4 { width: 152px; }
.c5 { width: 76px; gap: 4px; }

/* Text dialog */
.dialog { position: absolute; left: 320px; top: 208px; width: 431px; padding: 0 4px 5px 5px; background: #edc566; }
.dtitle { font: 11px/21px var(--small); text-align: center; color: #33291a; }
.dbody { display: flex; flex-direction: column; gap: 4px; padding: 6px 7px 6px 6px; background: #f0f0f0; }
.drow { display: flex; align-items: center; height: 15px; gap: 4px; }
.chk { appearance: none; display: grid; place-items: center; width: 9px; height: 9px; flex: none; background: #fff; border: 1px solid #777; }
.chk:checked::after { content: ""; width: 3px; height: 6px; border: solid #111; border-width: 0 1px 1px 0; transform: rotate(40deg); }
.dic { width: 9px; height: 9px; }
.mlabel { width: 60px; }
.dlang { width: 94px; }
.fmt { display: flex; gap: 1px; }
.fmt button { width: 15px; height: 14px; background: #f0f0f0; border: solid #777; border-width: 0 1px 1px 0; font: 9px/10px "Liberation Serif", serif; }
.dfont { flex: 1; height: 16px; }
.dtext { height: 106px; padding: 2px 2px; background: #fff; border: 1px solid #8fbfe0; font: 8px/11px Roboto, sans-serif; color: #222; resize: none; outline: 0; }
.choose { gap: 2px; width: 162px; height: 15px; background: #e8e8e8; border: 1px solid #b4b4b4; white-space: nowrap; }
.choose svg { width: 9px; height: 9px; }
.choose .dd { width: 5px; height: 5px; }
.live { display: flex; align-items: center; gap: 3px; flex: 1; padding-left: 22px; white-space: nowrap; }
.btn { width: 52px; height: 15px; background: #e6e6e6; border: 1px solid #b0b0b0; }
.btn.focus { border-color: #6cacdc; }

/* Overlays */
.ibeam { position: absolute; left: 354px; top: 279px; width: 7px; height: 11px; }
.timer { position: absolute; left: 498px; top: 286px; width: 25px; height: 25px; border-radius: 50%; background: linear-gradient(#4694f8, #5cb8fc); box-shadow: 0 1px 2px 1px #dde4ec; font: 8px/25px var(--ui); color: #e6f2ff; text-align: center; }
.brand { position: absolute; right: 36px; bottom: 31px; display: flex; align-items: center; gap: 6px; color: #fff; font: 27px/38px "Noto Sans CJK SC", sans-serif; text-shadow: 1px 1px 1px #333, 0 0 1px #555; white-space: nowrap; }
.brand svg { width: 44px; height: 38px; }
.ime { position: absolute; right: 23px; bottom: 6px; display: flex; align-items: center; gap: 3px; height: 13px; padding: 0 3px 0 0; background: #fdfdfe; border: 1px solid #cfd6e2; font: bold 9px/10px "Noto Sans CJK SC", sans-serif; color: #1c6fc0; }
.ime svg { width: 9px; height: 9px; }
.ime .sogou { width: 15px; height: 15px; }
```
